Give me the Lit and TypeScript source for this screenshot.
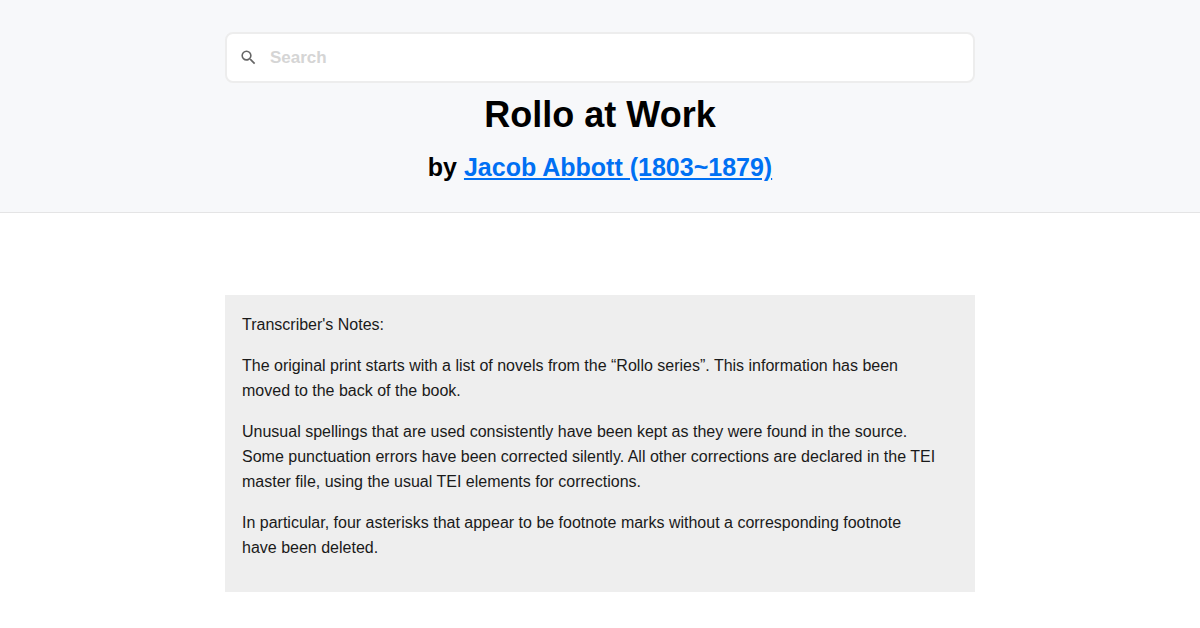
import { LitElement, html, css } from "lit";
import { customElement } from "lit/decorators.js";

@customElement("app-root")
export class AppRoot extends LitElement {
  static styles = css`
    :host {
      display: block;
      font-family: "Liberation Sans", Arial, sans-serif;
      font-size: 16px;
      color: #1a1a1a;
      background: #fff;
    }
    * { box-sizing: border-box; }
    .header {
      padding: 32px 16px 29px;
      background: #f7f8fa;
      border-bottom: 1px solid #e4e4e5;
      text-align: center;
      color: #000;
    }
    .search {
      display: flex;
      align-items: center;
      gap: 12px;
      max-width: 750px;
      height: 51px;
      margin: 0 auto;
      padding: 0 12px;
      background: #fff;
      border: 2px solid #ededed;
      border-radius: 8px;
    }
    .icon { width: 19px; height: 19px; fill: #666; flex: none; }
    .field {
      flex: 1;
      min-width: 0;
      padding: 0;
      border: 0;
      outline: 0;
      background: none;
      font: bold 17px "Liberation Sans", Arial, sans-serif;
    }
    .field::placeholder { color: #d5d5d5; opacity: 1; }
    .title { margin: 8px 0 0; font-size: 36px; line-height: 48px; }
    .author { margin: 12px 0 0; font-size: 25px; line-height: 32px; }
    .link { color: #0070f3; }
    .content { padding: 82px 16px 36px; }
    .notes {
      max-width: 750px;
      margin: 0 auto;
      padding: 17px 38px 32px 17px;
      background: #eee;
      line-height: 25px;
    }
    .para { margin: 0 0 16px; }
    .para:last-child { margin: 0; }
  `;

  render() {
    return html`
      <header class="header">
        <label class="search">
          <svg class="icon" viewBox="0 0 24 24" aria-hidden="true">
            <path d="M15.5 14h-.79l-.28-.27A6.471 6.471 0 0 0 16 9.5 6.5 6.5 0 1 0 9.5 16c1.61 0 3.09-.59 4.23-1.57l.27.28v.79l5 4.99L20.49 19l-4.99-5zm-6 0C7.01 14 5 11.99 5 9.5S7.01 5 9.5 5 14 7.01 14 9.5 11.99 14 9.5 14z" />
          </svg>
          <input class="field" type="search" placeholder="Search" aria-label="Search" />
        </label>
        <h1 class="title">Rollo at Work</h1>
        <h2 class="author">by <a class="link" href="#author">Jacob Abbott (1803~1879)</a></h2>
      </header>
      <main class="content">
        <section class="notes">
          <p class="para">Transcriber's Notes:</p>
          <p class="para">The original print starts with a list of novels from the “Rollo series”. This information has been moved to the back of the book.</p>
          <p class="para">Unusual spellings that are used consistently have been kept as they were found in the source. Some punctuation errors have been corrected silently. All other corrections are declared in the TEI master file, using the usual TEI elements for corrections.</p>
          <p class="para">In particular, four asterisks that appear to be footnote marks without a corresponding footnote have been deleted.</p>
        </section>
      </main>
    `;
  }
}
